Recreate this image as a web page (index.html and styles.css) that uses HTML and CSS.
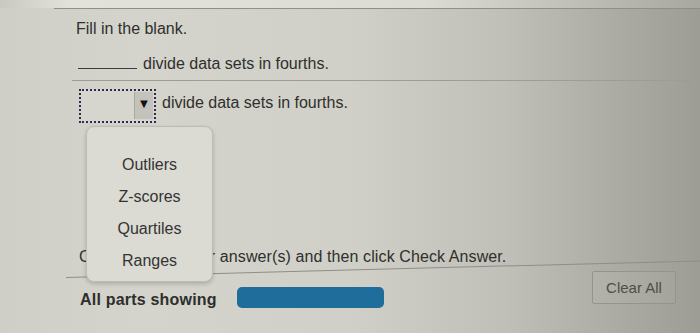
FILE: index.html
```html
<!DOCTYPE html>
<html>
<head>
<meta charset="utf-8">
<link rel="stylesheet" href="styles.css">
</head>
<body>
<div class="page">
  <div class="topbar"><div class="topline"></div></div>
  <div class="content">
    <div class="prompt">Fill in the blank.</div>
    <div class="row1"><span class="blank"></span><span class="txt">divide data sets in fourths.</span></div>
    <div class="divider"></div>
    <div class="row2">
      <div class="select">
        <div class="sel-value"></div>
        <div class="sel-btn">&#9660;</div>
        <ul class="menu">
          <li>Outliers</li>
          <li>Z-scores</li>
          <li>Quartiles</li>
          <li>Ranges</li>
        </ul>
      </div>
      <span class="txt2">divide data sets in fourths.</span>
    </div>
    <div class="instructions">Click to select your answer(s) and then click Check Answer.</div>
    <div class="divider2"></div>
    <div class="footer">
      <span class="parts">All parts showing</span>
      <div class="progress"></div>
      <button class="clear">Clear All</button>
    </div>
  </div>
</div>
</body>
</html>
```
FILE: styles.css
```css
html, body {
  margin: 0;
  padding: 0;
}
body {
  width: 700px;
  height: 333px;
  overflow: hidden;
  font-family: "Liberation Sans", Arial, sans-serif;
  font-size: 16px;
  color: #2f2f2d;
  background: linear-gradient(to right, #cfcfc7 0%, #d4d4cc 20%, #d0d0c8 50%, #c0c0b8 72%, #a9a9a1 90%, #9d9d95 100%);
}
.page {
  position: relative;
  height: 333px;
}
.topbar {
  height: 8px;
  background: linear-gradient(to right, #c9c9c1 0%, #e2e2da 10%, #dcdcd4 60%, #a8a8a0 100%);
}
.topline {
  margin-left: 54px;
  height: 8px;
  border-bottom: 1px solid #8f8f87;
}
.content {
  padding-left: 76px;
}
.prompt {
  margin-top: 11px;
  line-height: 20px;
}
.row1 {
  margin-top: 15px;
  line-height: 20px;
  display: flex;
  align-items: baseline;
}
.blank {
  display: inline-block;
  width: 59px;
  height: 14px;
  margin-left: 2px;
  margin-right: 6px;
  border-bottom: 1px solid #3a3a38;
}
.divider {
  margin-top: 6px;
  margin-left: -4px;
  height: 1px;
  background: #9d9d95;
}
.row2 {
  margin-top: 8px;
  display: flex;
  align-items: flex-start;
}
.select {
  position: relative;
  margin-left: 3px;
  width: 77px;
  height: 34px;
  box-sizing: border-box;
  border: 2px dotted #2a2d50;
  background: #d6d6ce;
  display: flex;
  justify-content: flex-end;
}
.sel-value {
  flex: 1;
}
.sel-btn {
  width: 18px;
  margin: 1px 1px 2px 0;
  background: #c3c3bb;
  border-left: 1px solid #a9a9a1;
  font-size: 13px;
  line-height: 24px;
  text-align: center;
  color: #111;
}
.txt2 {
  margin-left: 6px;
  margin-top: 4px;
  line-height: 20px;
}
.menu {
  position: absolute;
  left: 5px;
  top: 35px;
  width: 127px;
  height: 156px;
  box-sizing: border-box;
  margin: 0;
  padding: 22px 0 0;
  list-style: none;
  background: #dbdbd3;
  border: 1px solid #bcbcb4;
  border-radius: 8px;
  box-shadow: 0 2px 4px rgba(0, 0, 0, 0.18);
  z-index: 2;
}
.menu li {
  line-height: 32px;
  text-align: center;
  color: #333;
}
.instructions {
  margin-top: 124px;
  margin-left: 3px;
  line-height: 20px;
  white-space: nowrap;
  letter-spacing: 0.1px;
}
.divider2 {
  margin-top: 10px;
  margin-left: -10px;
  width: 640px;
  height: 1px;
  background: #8e8e86;
  transform-origin: left center;
  transform: rotate(-1.5deg);
}
.footer {
  display: flex;
  align-items: flex-start;
  padding-left: 4px;
}
.parts {
  margin-top: 12px;
  line-height: 20px;
  font-weight: bold;
  color: #2e2e2c;
  letter-spacing: 0.2px;
}
.progress {
  margin-left: 20px;
  margin-top: 9px;
  width: 147px;
  height: 21px;
  border-radius: 5px;
  background: #1e6d9b;
}
.clear {
  margin-left: auto;
  margin-right: 24px;
  margin-top: -7px;
  width: 84px;
  height: 33px;
  box-sizing: border-box;
  border: 1px solid #94948c;
  border-radius: 2px;
  background: rgba(255, 255, 255, 0.04);
  font-family: "Liberation Sans", Arial, sans-serif;
  font-size: 15px;
  color: #4d4d49;
  padding: 0;
}
```
